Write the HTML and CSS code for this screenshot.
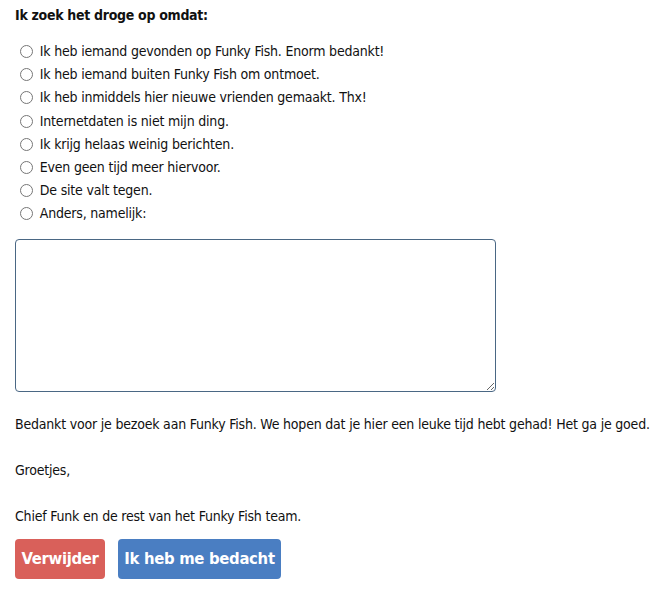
FILE: index.html
```html
<!DOCTYPE html>
<html lang="nl">
<head>
<meta charset="utf-8">
<link rel="stylesheet" href="styles.css">
</head>
<body>
<div class="page">
  <h4 class="title">Ik zoek het droge op omdat:</h4>
  <ul class="options">
    <li><label><input type="radio" name="reden"> Ik heb iemand gevonden op Funky Fish. Enorm bedankt!</label></li>
    <li><label><input type="radio" name="reden"> Ik heb iemand buiten Funky Fish om ontmoet.</label></li>
    <li><label><input type="radio" name="reden"> Ik heb inmiddels hier nieuwe vrienden gemaakt. Thx!</label></li>
    <li><label><input type="radio" name="reden"> Internetdaten is niet mijn ding.</label></li>
    <li><label><input type="radio" name="reden"> Ik krijg helaas weinig berichten.</label></li>
    <li><label><input type="radio" name="reden"> Even geen tijd meer hiervoor.</label></li>
    <li><label><input type="radio" name="reden"> De site valt tegen.</label></li>
    <li><label><input type="radio" name="reden"> Anders, namelijk:</label></li>
  </ul>
  <textarea class="other"></textarea>
  <p class="text">Bedankt voor je bezoek aan Funky Fish. We hopen dat je hier een leuke tijd hebt gehad! Het ga je goed.</p>
  <p class="text">Groetjes,</p>
  <p class="text">Chief Funk en de rest van het Funky Fish team.</p>
  <div class="actions">
    <button class="btn btn-red">Verwijder</button>
    <button class="btn btn-blue">Ik heb me bedacht</button>
  </div>
</div>
</body>
</html>
```

FILE: styles.css
```css
html, body {
  margin: 0;
  padding: 0;
  background: #fff;
}
body {
  font-family: "DejaVu Sans Condensed", "Liberation Sans", sans-serif;
  font-size: 14px;
  letter-spacing: -0.2px;
  color: #111;
}
.page {
  padding: 5px 15px 0 15px;
}
.title {
  margin: 0;
  font-size: 14px;
  font-weight: bold;
  line-height: 20px;
  letter-spacing: -0.3px;
}
.options {
  list-style: none;
  margin: 15px 0 0 0;
  padding: 0;
}
.options li {
  line-height: 23.2px;
  height: 23.2px;
  white-space: nowrap;
}
.options input {
  margin: 0 3px 0 5px;
  width: 13px;
  height: 13px;
  vertical-align: -2px;
}
.other {
  display: block;
  box-sizing: border-box;
  margin-top: 13px;
  width: 481px;
  height: 153px;
  border: 1px solid #4a6784;
  border-radius: 4px;
  resize: both;
}
.text {
  margin: 21px 0 0 0;
  line-height: 23px;
  white-space: nowrap;
}
.text + .text {
  margin-top: 23px;
}
.actions {
  display: flex;
  gap: 13px;
  margin-top: 11px;
}
.btn {
  height: 40px;
  border: none;
  border-radius: 4px;
  color: #fff;
  font-family: inherit;
  font-size: 16.5px;
  font-weight: bold;
  letter-spacing: -0.3px;
  padding: 0;
  white-space: nowrap;
}
.btn-red {
  background: #d9605a;
  width: 90px;
}
.btn-blue {
  background: #4a7ec2;
  width: 163px;
}
```
